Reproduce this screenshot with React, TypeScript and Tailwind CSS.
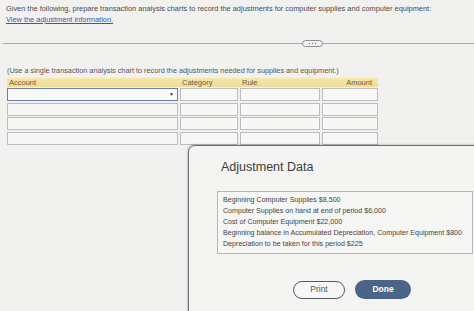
import React from 'react';

const rows = [0, 1, 2, 3];

const cell = 'h-[13px] border border-[#b9bcc2] bg-[#f7f7f5]';

const dataLines = [
  'Beginning Computer Supplies $8,500',
  'Computer Supplies on hand at end of period $6,000',
  'Cost of Computer Equipment $22,000',
  'Beginning balance in Accumulated Depreciation, Computer Equipment $800',
  'Depreciation to be taken for this period $225',
];

export default function App() {
  return (
    <div
      className="relative w-[474px] h-[311px] overflow-hidden bg-[#f1f1ef] text-[#4a4a4a]"
      style={{ fontFamily: '"Liberation Sans", Arial, sans-serif' }}
    >
      {/* Question text */}
      <div className="px-[6px] pt-[3px] text-[7.4px] leading-[11px]">
        <p>Given the following, prepare transaction analysis charts to record the adjustments for computer supplies and computer equipment:</p>
        <a className="text-[#3d57a8] underline">View the adjustment information.</a>
      </div>

      {/* Divider with pill */}
      <div className="relative mt-[18px] ml-[3px] h-px bg-[#a7a9ab]">
        <div className="absolute left-[299px] top-[-3px] flex h-[7px] w-[21px] items-center justify-center gap-[2px] rounded-full border border-[#8d9094] bg-[#f1f1ef]">
          <span className="h-px w-px bg-[#666]" />
          <span className="h-px w-px bg-[#666]" />
          <span className="h-px w-px bg-[#666]" />
        </div>
      </div>

      {/* Instructions */}
      <p className="mt-[22px] px-[7px] text-[7.3px] leading-[10px] text-[#555]">
        (Use a single transaction analysis chart to record the adjustments needed for supplies and equipment.)
      </p>

      {/* Chart */}
      <div className="ml-[7px] mt-[2px] w-[371px]">
        <div className="grid h-[9px] grid-cols-[173px_60px_82px_56px] bg-gradient-to-b from-[#f6e6ab] to-[#efdc98] text-[7.5px] leading-[9px] text-[#6b5b3c]">
          <span className="pl-[2px]">Account</span>
          <span className="pl-[2px]">Category</span>
          <span className="pl-[2px]">Rule</span>
          <span className="pr-[6px] text-right">Amount</span>
        </div>
        <div className="mt-[1px] flex flex-col gap-[1.5px]">
          {rows.map((r) => (
            <div key={r} className="grid grid-cols-[173px_60px_82px_56px]">
              <div className="pr-[2px]">
                {r === 0 ? (
                  <div className="flex h-[13px] items-center justify-end border border-[#6f7fa6] bg-[#f9f9f8] pr-[2px]">
                    <span className="flex h-[9px] w-[7px] items-center justify-center bg-white text-[5px] leading-none text-[#333]">▼</span>
                  </div>
                ) : (
                  <div className={cell} />
                )}
              </div>
              <div className="pr-[2px]">
                <div className={cell} />
              </div>
              <div className="pr-[2px]">
                <div className={cell} />
              </div>
              <div>
                <div className={cell} />
              </div>
            </div>
          ))}
        </div>
      </div>

      {/* Adjustment data modal */}
      <div className="absolute left-[188px] top-[145px] h-[180px] w-[300px] rounded-tl-[7px] border border-[#6b6d70] bg-[#f4f4f2] shadow-[-1px_-1px_2px_rgba(0,0,0,0.15)]">
        <h2 className="ml-[32px] mt-[14px] text-[12.5px] leading-[15px] text-[#3c3c3c]">Adjustment Data</h2>
        <div className="ml-[28px] mt-[16px] w-[256px] border border-[#b5b7ba] bg-[#f6f6f4] py-[3px] pl-[5px] text-[7.1px] leading-[11px] text-[#444]">
          {dataLines.map((l) => (
            <p key={l}>{l}</p>
          ))}
        </div>
        <div className="ml-[104px] mt-[26px] flex items-center gap-[10px]">
          <button className="h-[18px] w-[52px] rounded-full border border-[#55585c] bg-[#f6f6f4] text-[8.5px] text-[#555]">
            Print
          </button>
          <button className="h-[19px] w-[56px] rounded-full bg-[#4b6588] text-[8.5px] font-bold text-white">
            Done
          </button>
        </div>
      </div>
    </div>
  );
}
